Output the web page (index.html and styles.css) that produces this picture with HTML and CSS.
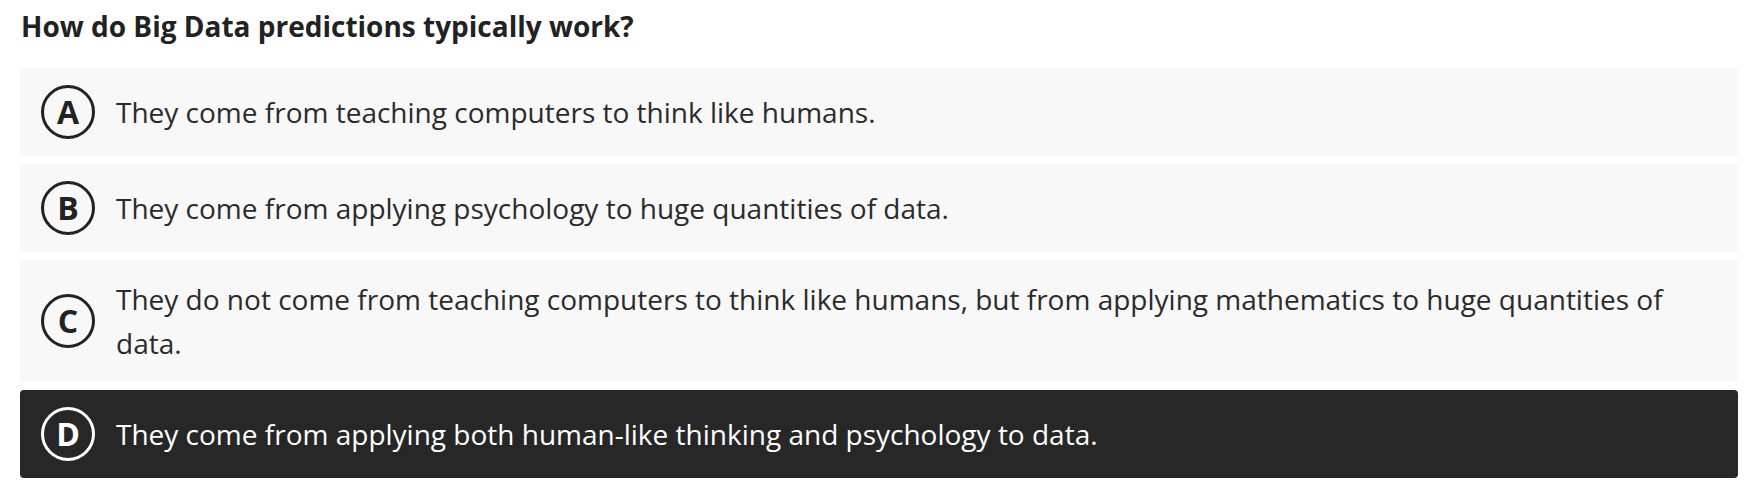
FILE: index.html
```html
<!DOCTYPE html>
<html lang="en">
<head>
<meta charset="utf-8">
<title>Quiz</title>
<link rel="stylesheet" href="styles.css">
</head>
<body>
<div class="quiz">
  <h2 class="question">How do Big Data predictions typically work?</h2>
  <ul class="options">
    <li class="option">
      <span class="badge">A</span>
      <span class="label">They come from teaching computers to think like humans.</span>
    </li>
    <li class="option">
      <span class="badge">B</span>
      <span class="label">They come from applying psychology to huge quantities of data.</span>
    </li>
    <li class="option">
      <span class="badge">C</span>
      <span class="label">They do not come from teaching computers to think like humans, but from applying mathematics to huge quantities of data.</span>
    </li>
    <li class="option selected">
      <span class="badge">D</span>
      <span class="label">They come from applying both human-like thinking and psychology to data.</span>
    </li>
  </ul>
</div>
</body>
</html>
```

FILE: styles.css
```css
html, body {
  margin: 0;
  padding: 0;
  background: #ffffff;
}
body {
  font-family: "Open Sans", "Liberation Sans", sans-serif;
  color: #2a2a2a;
}
.quiz {
  padding: 0 16px 0 20px;
}
.question {
  margin: 0;
  padding: 8px 0 0 1px;
  height: 68px;
  box-sizing: border-box;
  font-size: 28px;
  line-height: 36px;
  font-weight: 700;
  color: #222222;
}
.options {
  list-style: none;
  margin: 0;
  padding: 0;
  display: flex;
  flex-direction: column;
  gap: 8px;
}
.option {
  display: flex;
  align-items: center;
  gap: 21px;
  padding: 17px 20px 17px 21px;
  background: #f8f8f8;
  border-radius: 4px;
}
.badge {
  flex: none;
  width: 54px;
  height: 54px;
  box-sizing: border-box;
  border: 3px solid #222222;
  border-radius: 50%;
  display: flex;
  align-items: center;
  justify-content: center;
  font-weight: 700;
  font-size: 32px;
  line-height: 1;
  color: #222222;
}
.label {
  font-size: 28px;
  line-height: 44px;
  color: #2b2b2b;
}
.option.selected {
  background: #272727;
}
.option.selected .badge {
  border-color: #ffffff;
  color: #ffffff;
}
.option.selected .label {
  color: #ffffff;
}
```
